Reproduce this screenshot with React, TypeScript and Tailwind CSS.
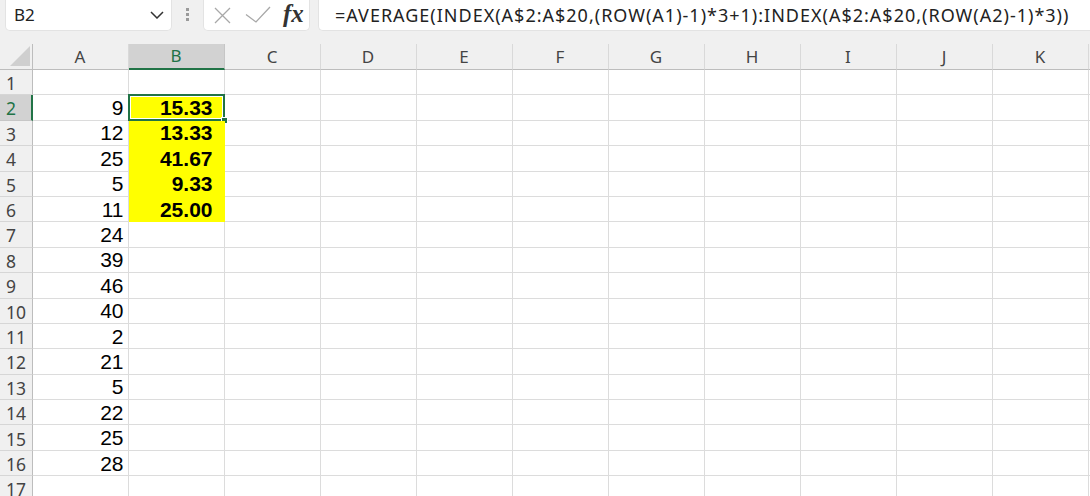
import React from "react";

const colA: (number | null)[] = [null, 9, 12, 25, 5, 11, 24, 39, 46, 40, 2, 21, 5, 22, 25, 28, null];
const colB: (string | null)[] = [null, "15.33", "13.33", "41.67", "9.33", "25.00"];
const letters = ["A", "B", "C", "D", "E", "F", "G", "H", "I", "J", "K"];

const formula = "=AVERAGE(INDEX(A$2:A$20,(ROW(A1)-1)*3+1):INDEX(A$2:A$20,(ROW(A2)-1)*3))";

const TopBar = () => (
  <div className="h-[44px] bg-[#f0f0f0] flex items-start pl-[5px]">
    {/* name box */}
    <div className="w-[167px] h-[31px] bg-white rounded-b-[5px] border border-t-0 border-[#e3e3e3] flex items-center justify-between pl-[8px] pr-[7px]">
      <span className="font-['Noto_Sans',sans-serif] text-[17px] text-[#222]">B2</span>
      <svg width="14" height="8" viewBox="0 0 14 8">
        <path d="M1 1 L7 7 L13 1" fill="none" stroke="#333" strokeWidth="1.5" />
      </svg>
    </div>
    <div className="ml-[14px] mt-[8px] flex flex-col gap-[2px]">
      <div className="w-[3px] h-[3px] bg-[#9a9a9a]" />
      <div className="w-[3px] h-[3px] bg-[#9a9a9a]" />
      <div className="w-[3px] h-[3px] bg-[#9a9a9a]" />
    </div>
    {/* cancel / enter / fx */}
    <div className="ml-[14px] w-[107px] h-[31px] bg-white rounded-b-[5px] border border-t-0 border-[#e3e3e3] flex items-center pl-[10px]">
      <svg width="17" height="17" viewBox="0 0 17 17">
        <path d="M1 1 L16 16 M16 1 L1 16" stroke="#a8a8a8" strokeWidth="1.3" fill="none" />
      </svg>
      <svg className="ml-[14px]" width="26" height="18" viewBox="0 0 26 18">
        <path d="M1 8.5 L11 16 L25 1" stroke="#a8a8a8" strokeWidth="1.3" fill="none" />
      </svg>
      <span className="ml-[12px] font-['Liberation_Serif',serif] italic font-bold text-[25px] leading-none text-[#333] -mt-[3px]">
        fx
      </span>
    </div>
    {/* formula box */}
    <div className="ml-[8px] flex-1 h-[31px] bg-white rounded-bl-[5px] border border-t-0 border-r-0 border-[#e3e3e3] flex items-center pl-[16px] overflow-hidden">
      <span className="font-['Noto_Sans',sans-serif] text-[18px] tracking-[1px] text-[#222] whitespace-nowrap">{formula}</span>
    </div>
  </div>
);

const App = () => {
  return (
    <div className="w-[1090px] h-[496px] overflow-hidden bg-white">
      <TopBar />
      <div className="grid grid-cols-[32.5px_repeat(11,96px)_1fr] grid-rows-[26px_repeat(17,25.4px)]">
        {/* header row */}
        <div className="bg-[#f0f0f0] border-b border-r border-[#bdbdbd] flex items-end justify-end pr-[2px] pb-[3px]">
          <svg width="20" height="20" viewBox="0 0 20 20">
            <polygon points="20,0 20,20 0,20" fill="#cfcfcf" />
          </svg>
        </div>
        {letters.map((l) => (
          <div
            key={l}
            className={
              l === "B"
                ? "bg-[#d2d2d2] border-b-2 border-b-[#217346] border-r border-r-[#c6c6c6] flex items-center justify-center font-['Noto_Sans',sans-serif] text-[17px] text-[#217346]"
                : "bg-[#f0f0f0] border-b border-b-[#bdbdbd] border-r border-r-[#d9d9d9] flex items-center justify-center font-['Noto_Sans',sans-serif] text-[17px] text-[#444]"
            }
          >
            {l}
          </div>
        ))}
        <div className="bg-[#f0f0f0] border-b border-[#bdbdbd]" />

        {colA.map((a, i) => {
          const row = i + 1;
          const b = colB[i] ?? null;
          const selRow = row === 2;
          return (
            <React.Fragment key={row}>
              <div
                className={
                  selRow
                    ? "bg-[#d2d2d2] border-r-2 border-r-[#217346] border-b border-b-[#c6c6c6] flex items-center pl-[6px] pt-[2px] font-['Noto_Sans',sans-serif] text-[17.5px] text-[#217346]"
                    : "bg-[#f0f0f0] border-r border-r-[#bdbdbd] border-b border-b-[#d6d6d6] flex items-center pl-[6px] pt-[2px] font-['Noto_Sans',sans-serif] text-[17.5px] text-[#444]"
                }
              >
                {row}
              </div>
              <div className="border-r border-b border-[#dcdcdc] flex items-center justify-end pr-[4px] font-['Liberation_Sans',sans-serif] text-[21px] leading-none text-black">
                {a ?? ""}
              </div>
              {b ? (
                <div className="relative bg-[#ffff00] border-r border-b border-[#ffff00] flex items-center justify-end pr-[11px] font-['Liberation_Sans',sans-serif] font-bold text-[21px] leading-none text-black">
                  {b}
                  {selRow && (
                    <>
                      <div className="absolute -left-[1px] -top-[1px] -right-[1px] -bottom-[1px] border-2 border-[#217346] shadow-[inset_0_0_0_1px_white]" />
                      <div className="absolute -right-[4px] -bottom-[4px] w-[7px] h-[7px] bg-[#217346] border border-white" />
                    </>
                  )}
                </div>
              ) : (
                <div className="border-r border-b border-[#dcdcdc]" />
              )}
              {letters.slice(2).map((l) => (
                <div key={l} className="border-r border-b border-[#dcdcdc]" />
              ))}
              <div className="border-b border-[#dcdcdc]" />
            </React.Fragment>
          );
        })}
      </div>
    </div>
  );
};

export default App;
